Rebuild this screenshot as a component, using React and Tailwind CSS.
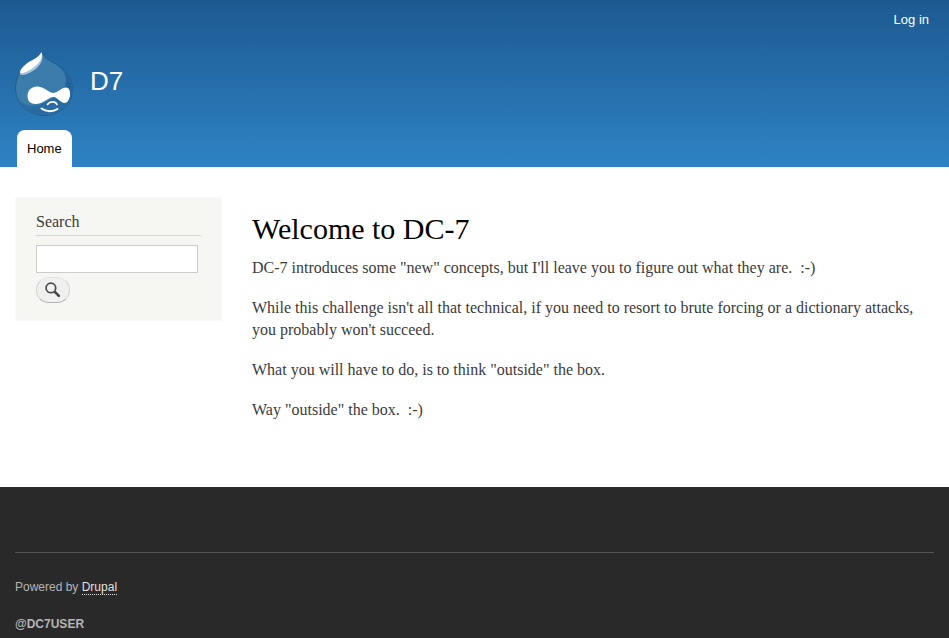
function DropLogo() {
  return (
    <svg viewBox="0 0 58 65" className="h-[65px] w-[58px]" role="img" aria-label="Drupal">
      <path d="M26.500 0.500C27.800 6 32 8 38 11.500C49 17 57.200 24.500 57.200 38C57.200 54 45 64.500 29 64.500C13 64.500 0.500 52.500 0.500 37C0.500 23 9 15.500 17.500 10.500C22.500 7.500 26 5 26.500 0.500Z" fill="#3b7cab" stroke="#205a8c" strokeWidth="0.9" />
      <path d="M39 12.500C49 18 56.800 26 56.800 38C56.800 44 55 49 52 53L40 47C47 41 51 37 51 29C51 22 46 17 39 12.500Z" fill="#22639a" />
      <path d="M3 48C7 58 17 64 29 64C43 64 54 55.500 56.600 43C52 39 47 40 40 45C30 52 21 57 12 54C8 53 5 51 3 48Z" fill="#286ba2" />
      <path d="M26.500 1C24.500 7.500 17 9.500 10 15C6.500 18 4 21 5 23C7 26 19.500 21 24.500 14C28 9.500 28 5 26.500 1Z" fill="#a9c4dc" />
      <path d="M26.500 1C24 7 16.500 8.500 10.500 13.500C7 16.500 4.500 20 5.500 21.800C7.500 23.500 18.500 18 23.500 12C26.500 8.500 27.500 5 26.500 1Z" fill="#fff" />
      <path d="M22 35.500C29 35.500 34 42 38.500 42C43 41.500 47 36.500 51 36.500C54 36.500 55.500 40 55 44C54.500 48.500 52.500 52 49.500 52C45.500 52 42.500 46 38.500 46C34 46 28 53 20.500 53C15.500 53 12.500 50 12.500 45C12.500 39 17 35.500 22 35.500Z" fill="#fff" />
      <path d="M32.500 53.500C35 50 40.500 50 42 53.500" fill="none" stroke="#fff" strokeWidth="1.600" strokeLinecap="round" />
      <path d="M26.500 57.500C31 61 38 61 42.500 58" fill="none" stroke="#fff" strokeWidth="2" strokeLinecap="round" />
    </svg>
  );
}

function SearchIcon() {
  return (
    <svg viewBox="0 0 16 16" className="size-4" aria-hidden="true">
      <path d="M9.800 9.800L13.800 13.800" stroke="#464646" strokeWidth="2.600" strokeLinecap="round" />
      <circle cx="5.900" cy="5.900" r="4.800" fill="none" stroke="#4b4b4b" strokeWidth="1.700" />
    </svg>
  );
}

export default function App() {
  return (
    <div className="flex min-h-screen flex-col bg-white font-['Liberation_Serif',serif] text-base leading-[22px] text-[#3b3b3b]">
      <header className="bg-linear-to-b from-[#1d5a91] to-[#2e83c4] px-[15px] font-['Liberation_Sans',sans-serif] text-white">
        <nav className="flex justify-end px-[5px] pt-[10px] text-[13px] leading-5">
          <a href="#login">Log in</a>
        </nav>
        <div className="flex items-start gap-[17px] pt-[21px]">
          <a href="#home"><DropLogo /></a>
          <a href="#home" className="pt-[14px] text-[26px] leading-8">D7</a>
        </div>
        <nav className="flex px-[2px] pt-[14px]">
          <a href="#home" className="rounded-t-lg bg-white px-[10px] pt-[9px] pb-2 text-[13px] leading-5 text-black">Home</a>
        </nav>
      </header>

      <div className="flex items-start gap-[30px] px-[15px] pt-[30px] pb-[66px]">
        <aside className="w-[207px] shrink-0 border border-[#f9f9f9] bg-[#f6f6f2] px-5 pt-[13px] pb-[17px]">
          <form onSubmit={(event) => event.preventDefault()}>
            <h2 className="border-b border-[#d6d6d6] pb-[2px]">
              <label htmlFor="search">Search</label>
            </h2>
            <input id="search" type="text" className="mt-[9px] block h-7 w-[162px] border border-[#ccc] bg-white px-1 outline-none" />
            <button type="submit" aria-label="Search" className="mt-1 flex h-[26px] w-[34px] items-center justify-center rounded-full border border-[#e4e4e4] border-r-[#d2d2d2] border-b-[#b4b4b4] border-l-[#d2d2d2] bg-[#f0f0f0]">
              <SearchIcon />
            </button>
          </form>
        </aside>
        <main className="min-w-0 flex-1 pt-4">
          <h1 className="text-[30px] leading-8 text-black">Welcome to DC-7</h1>
          <div className="flex flex-col gap-[18px] pt-3">
            <p>DC-7 introduces some "new" concepts, but I'll leave you to figure out what they are.&nbsp; :-)</p>
            <p>While this challenge isn't all that technical, if you need to resort to brute forcing or a dictionary attacks, you probably won't succeed.</p>
            <p>What you will have to do, is to think "outside" the box.</p>
            <p>Way "outside" the box.&nbsp; :-)</p>
          </div>
        </main>
      </div>

      <footer className="flex-1 bg-[#292929] px-[15px] pt-[65px] font-['Liberation_Sans',sans-serif] text-xs leading-4 text-[#b5b5b5]">
        <div className="border-t border-[#555] pt-[26px]">
          <p>
            Powered by <a href="#drupal" className="border-b border-dotted border-[#e0e0e0] text-[#e0e0e0]">Drupal</a>
          </p>
          <p className="pt-[21px] font-bold">@DC7USER</p>
        </div>
      </footer>
    </div>
  );
}
